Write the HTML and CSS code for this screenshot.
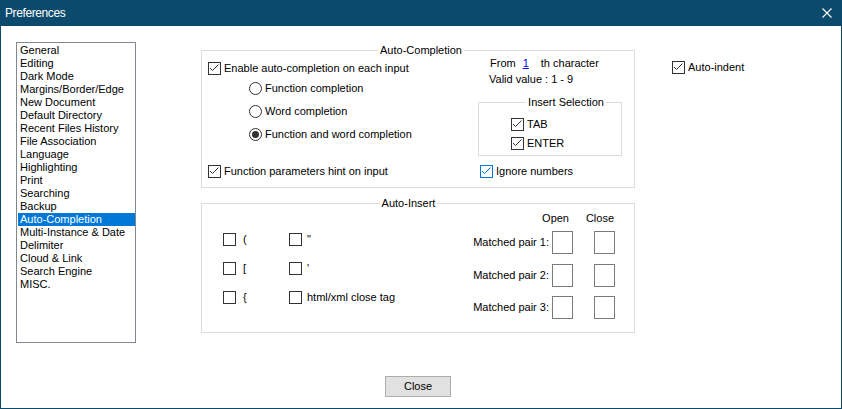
FILE: index.html
```html
<!DOCTYPE html>
<html>
<head>
  <meta charset="UTF-8">
  <title>Preferences</title>
  <link rel="stylesheet" href="styles.css">
</head>
<body>

  <div class="window">
    <div class="titlebar">
      <span class="title">Preferences</span>
      <svg class="close-x" width="10" height="10" viewBox="0 0 10 10">
        <path d="M0.5 0.5 L9.5 9.5 M9.5 0.5 L0.5 9.5" stroke="#fff" stroke-width="1.1" fill="none"/>
      </svg>
    </div>

    <div class="client">
      <ul class="listbox">
        <li>General</li>
        <li>Editing</li>
        <li>Dark Mode</li>
        <li>Margins/Border/Edge</li>
        <li>New Document</li>
        <li>Default Directory</li>
        <li>Recent Files History</li>
        <li>File Association</li>
        <li>Language</li>
        <li>Highlighting</li>
        <li>Print</li>
        <li>Searching</li>
        <li>Backup</li>
        <li class="selected">Auto-Completion</li>
        <li>Multi-Instance &amp; Date</li>
        <li>Delimiter</li>
        <li>Cloud &amp; Link</li>
        <li>Search Engine</li>
        <li>MISC.</li>
      </ul>

      <div class="page">
        <div class="groups">

          <!-- Auto-Completion -->
          <fieldset class="group ac">
            <legend>Auto-Completion</legend>
            <div class="ac-top">
              <div class="ac-left">
                <label class="opt"><span class="cb checked"><svg width="11" height="11" viewBox="0 0 11 11"><polyline points="1,5 3.5,7.5 9.5,1.5" fill="none" stroke="#333"/></svg></span>Enable auto-completion on each input</label>
                <div class="radios">
                  <label class="opt"><span class="rb"></span>Function completion</label>
                  <label class="opt"><span class="rb"></span>Word completion</label>
                  <label class="opt"><span class="rb on"></span>Function and word completion</label>
                </div>
              </div>
              <div class="ac-right">
                <div class="from"><span>From</span><span class="from-num">1</span><span>th character</span></div>
                <div class="valid">Valid value : 1 - 9</div>
                <fieldset class="group sel">
                  <legend>Insert Selection</legend>
                  <label class="opt"><span class="cb checked"><svg width="11" height="11" viewBox="0 0 11 11"><polyline points="1,5 3.5,7.5 9.5,1.5" fill="none" stroke="#333"/></svg></span>TAB</label>
                  <label class="opt"><span class="cb checked"><svg width="11" height="11" viewBox="0 0 11 11"><polyline points="1,5 3.5,7.5 9.5,1.5" fill="none" stroke="#333"/></svg></span>ENTER</label>
                </fieldset>
              </div>
            </div>
            <div class="ac-bottom">
              <label class="opt hint"><span class="cb checked"><svg width="11" height="11" viewBox="0 0 11 11"><polyline points="1,5 3.5,7.5 9.5,1.5" fill="none" stroke="#333"/></svg></span>Function parameters hint on input</label>
              <label class="opt"><span class="cb checked focus"><svg width="11" height="11" viewBox="0 0 11 11"><polyline points="1,5 3.5,7.5 9.5,1.5" fill="none" stroke="#0078d7"/></svg></span>Ignore numbers</label>
            </div>
          </fieldset>

          <!-- Auto-Insert -->
          <fieldset class="group ai">
            <legend>Auto-Insert</legend>
            <div class="ai-body">
              <div class="ai-checks">
                <label class="opt wide"><span class="cb"></span>(</label>
                <label class="opt mid"><span class="cb"></span>"</label>
                <label class="opt wide"><span class="cb"></span>[</label>
                <label class="opt mid"><span class="cb"></span>'</label>
                <label class="opt wide"><span class="cb"></span>{</label>
                <label class="opt mid"><span class="cb"></span>html/xml close tag</label>
              </div>
              <div class="ai-pairs">
                <span></span>
                <span class="head open">Open</span>
                <span class="head close">Close</span>

                <span class="pair-label">Matched pair 1:</span>
                <span class="pair-box"></span>
                <span class="pair-box"></span>

                <span class="pair-label">Matched pair 2:</span>
                <span class="pair-box"></span>
                <span class="pair-box"></span>

                <span class="pair-label">Matched pair 3:</span>
                <span class="pair-box"></span>
                <span class="pair-box"></span>
              </div>
            </div>
          </fieldset>

          <div class="buttons">
            <button class="btn">Close</button>
          </div>
        </div>

        <label class="opt indent"><span class="cb checked"><svg width="11" height="11" viewBox="0 0 11 11"><polyline points="1,5 3.5,7.5 9.5,1.5" fill="none" stroke="#333"/></svg></span>Auto-indent</label>
      </div>
    </div>
  </div>

</body>
</html>
```

FILE: styles.css
```css
body {
  margin: 0;
  font-family: "Liberation Sans", Arial, sans-serif;
  font-size: 11px;
  line-height: 13px;
  color: #000;
  background: #fff;
}

.window {
  width: 842px;
  height: 409px;
  box-sizing: border-box;
  border: 1px solid #0b4a6c;
  border-top: 0;
  display: flex;
  flex-direction: column;
}

.titlebar {
  height: 26px;
  margin: 0 -1px;
  padding: 0 10px 0 5px;
  background: #0b4a6c;
  color: #fff;
  display: flex;
  align-items: center;
  justify-content: space-between;
  font-size: 12px;
  letter-spacing: -0.4px;
}

.close-x {
  display: block;
}

.client {
  display: flex;
  padding: 16px 0 0 15px;
}

/* list of pages */
.listbox {
  width: 120px;
  height: 301px;
  box-sizing: border-box;
  border: 1px solid #828790;
  margin: 0;
  padding: 1px 0 0 1px;
  list-style: none;
}

.listbox li {
  height: 13px;
  padding-left: 2px;
  white-space: nowrap;
}

.listbox li.selected {
  background: #0078d7;
  color: #fff;
}

.page {
  display: flex;
  align-items: flex-start;
  margin-left: 65px;
}

.groups {
  width: 434px;
  margin-top: 2px;
}

/* group boxes */
.group {
  box-sizing: border-box;
  margin: 0;
  padding: 0;
  min-width: 0;
  border: 1px solid #dcdcdc;
}

.group legend {
  margin: 0 auto;
  padding: 0 2px;
  line-height: 13px;
}

/* checkbox / radio rows */
.opt {
  display: flex;
  align-items: center;
  gap: 3px;
  height: 13px;
  white-space: nowrap;
}

.cb {
  width: 13px;
  height: 13px;
  box-sizing: border-box;
  border: 1px solid #333;
  background: #fff;
  flex: none;
}

.cb svg {
  display: block;
}

.cb.focus {
  border-color: #0078d7;
}

.rb {
  width: 13px;
  height: 13px;
  box-sizing: border-box;
  border: 1px solid #333;
  border-radius: 50%;
  background: #fff;
  flex: none;
  display: flex;
  align-items: center;
  justify-content: center;
}

.rb.on::after {
  content: "";
  width: 7px;
  height: 7px;
  border-radius: 50%;
  background: #333;
}

/* Auto-Completion */
.ac {
  padding: 0 0 9px 6px;
}

.ac-top {
  display: flex;
}

.ac-left {
  width: 270px;
  padding-top: 5px;
}

.radios {
  display: flex;
  flex-direction: column;
  gap: 10px;
  margin: 7px 0 0 41px;
}

.from {
  display: flex;
  margin-left: 12px;
}

.from-num {
  margin: 0 12px 0 7px;
  color: #0000ff;
  text-decoration: underline;
}

.valid {
  margin: 3px 0 0 11px;
}

.sel {
  width: 144px;
  margin-top: 10px;
  padding: 9px 0 5px 32px;
}

.sel .opt + .opt {
  margin-top: 6px;
}

.ac-bottom {
  display: flex;
  margin-top: 9px;
}

.hint {
  width: 272px;
}

/* Auto-Insert */
.ai {
  margin-top: 9px;
  padding: 0 19px 13px 0;
}

.ai-body {
  display: flex;
  justify-content: space-between;
  align-items: flex-start;
}

.ai-checks {
  display: grid;
  grid-template-columns: 66px auto;
  grid-auto-rows: 13px;
  row-gap: 16px;
  padding: 23px 0 0 21px;
}

.ai-checks .wide {
  gap: 7px;
}

.ai-checks .mid {
  gap: 5px;
}

.ai-pairs {
  display: grid;
  grid-template-columns: auto 24px 42px;
  grid-template-rows: 19px 33px 32px 23px;
  align-items: start;
  padding-top: 2px;
}

.head {
  justify-self: end;
  white-space: nowrap;
}

.head.open {
  margin-right: 4px;
}

.head.close {
  margin-right: 1px;
}

.pair-label {
  justify-self: end;
  line-height: 23px;
  white-space: nowrap;
}

.pair-box {
  justify-self: end;
  width: 21px;
  height: 23px;
  box-sizing: border-box;
  border: 1px solid #7a7a7a;
}

.buttons {
  display: flex;
  justify-content: center;
  margin-top: 43px;
}

.btn {
  width: 66px;
  height: 21px;
  padding: 0;
  border: 1px solid #adadad;
  background: #e1e1e1;
  color: #000;
  font: inherit;
}

.indent {
  margin: 19px 0 0 37px;
}
```
